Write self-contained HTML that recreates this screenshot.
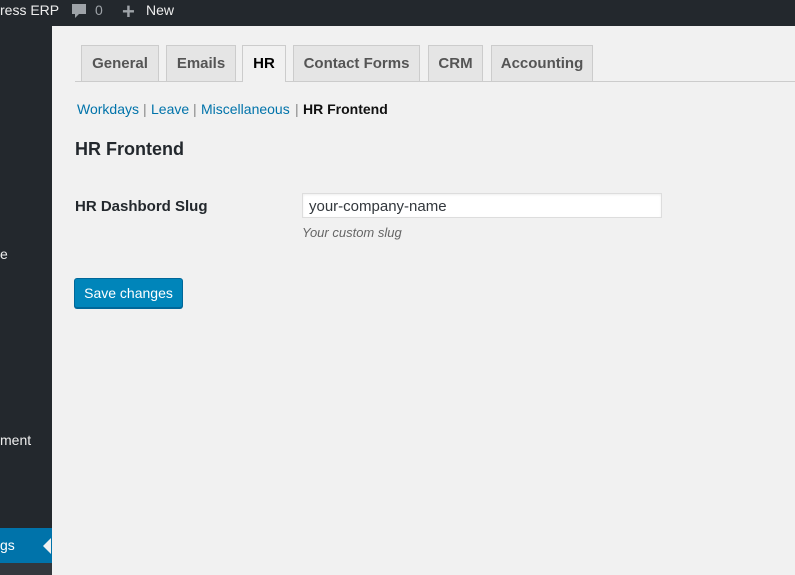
<!DOCTYPE html>
<html><head><style>
body{margin:0;width:795px;height:575px;background:#f1f1f1;font-family:"Liberation Sans",sans-serif;position:relative;overflow:hidden}
.a{position:absolute;white-space:nowrap}
.bar{left:0;top:0;width:795px;height:26px;background:#23282d}
.side{left:0;top:26px;width:52px;height:549px;background:#23282d}
.tab{top:45px;height:36px;background:#e5e5e5;border:1px solid #ccc;border-bottom:none;font-size:15px;font-weight:bold;color:#555;line-height:36px;text-align:center;box-sizing:border-box}
.lnk{color:#0073aa;font-size:14px;top:101px}
.sep{color:#888;font-size:14px;top:101px}
</style></head><body>
<div class="a bar"></div>
<div class="a" style="left:0;top:2px;color:#eee;font-size:14px">ress ERP</div>
<svg class="a" style="left:71px;top:3px" width="16" height="17" viewBox="0 0 16 17"><path d="M1 1h14v10H8l-4 4v-4H1z" fill="#9ea3a8"/></svg>
<div class="a" style="left:95px;top:2px;color:#9ea3a8;font-size:14px">0</div>
<div class="a" style="left:122px;top:-1px;color:#9ea3a8;font-size:22px;font-weight:bold">+</div>
<div class="a" style="left:146px;top:2px;color:#eee;font-size:14px">New</div>
<div class="a side"></div>
<div class="a" style="left:0;top:246px;color:#eee;font-size:14px">e</div>
<div class="a" style="left:0;top:432px;color:#eee;font-size:14px">ment</div>
<div class="a" style="left:0;top:528px;width:52px;height:35px;background:#0073aa"></div>
<div class="a" style="left:0;top:537px;color:#fff;font-size:14px">gs</div>
<div class="a" style="left:43px;top:538px;width:0;height:0;border:8px solid transparent;border-right-color:#f1f1f1;border-left:none"></div>
<div class="a" style="left:0;top:563px;width:52px;height:12px;background:#32373c"></div>
<div class="a" style="left:75px;top:81px;width:720px;height:1px;background:#ccc"></div>
<div class="a tab" style="left:81px;width:78px">General</div>
<div class="a tab" style="left:166px;width:70px">Emails</div>
<div class="a tab" style="left:242px;width:44px;height:37px;background:#f1f1f1;color:#000">HR</div>
<div class="a tab" style="left:293px;width:127px">Contact Forms</div>
<div class="a tab" style="left:428px;width:55px">CRM</div>
<div class="a tab" style="left:491px;width:102px">Accounting</div>
<div class="a lnk" style="left:77px">Workdays</div><div class="a sep" style="left:143px">|</div>
<div class="a lnk" style="left:151px">Leave</div><div class="a sep" style="left:193px">|</div>
<div class="a lnk" style="left:201px">Miscellaneous</div><div class="a sep" style="left:295px">|</div>
<div class="a" style="left:303px;top:101px;font-size:14px;font-weight:bold;color:#111">HR Frontend</div>
<div class="a" style="left:75px;top:139px;font-size:18px;font-weight:bold;color:#23282d">HR Frontend</div>
<div class="a" style="left:75px;top:198px;font-size:15px;font-weight:bold;color:#23282d">HR Dashbord Slug</div>
<div class="a" style="left:302px;top:193px;width:360px;height:25px;background:#fff;border:1px solid #ddd;box-sizing:border-box;box-shadow:inset 0 1px 2px rgba(0,0,0,.07)"></div>
<div class="a" style="left:309px;top:198px;font-size:15px;color:#32373c">your-company-name</div>
<div class="a" style="left:302px;top:225px;font-size:13px;font-style:italic;color:#666">Your custom slug</div>
<div class="a" style="left:74px;top:278px;width:109px;height:30px;background:#0085ba;border:1px solid #006799;border-radius:3px;box-sizing:border-box;box-shadow:0 1px 0 #006799;color:#fff;font-size:14px;line-height:28px;text-align:center">Save changes</div>
</body></html>
